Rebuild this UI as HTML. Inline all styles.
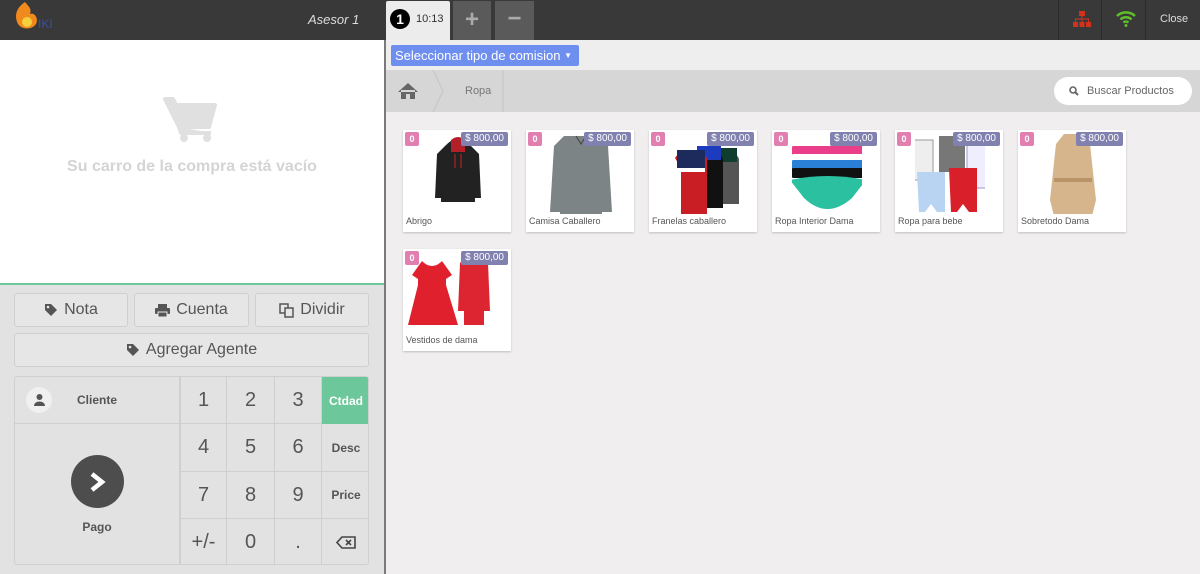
<!DOCTYPE html>
<html><head><meta charset="utf-8"><style>
*{box-sizing:border-box;margin:0;padding:0}
body{width:1200px;height:574px;overflow:hidden;font-family:"Liberation Sans",sans-serif;background:#f0eeef;position:relative}
.a{position:absolute}
.hdr{left:0;top:0;width:1200px;height:40px;background:#393939}
.btn{position:absolute;background:#e6e6e6;border:1px solid #cfcfcf;border-radius:3px;color:#555;font-size:16px;display:flex;align-items:center;justify-content:center;gap:6px}
.k{position:absolute;border-right:1px solid #cfcfcf;border-bottom:1px solid #cfcfcf;display:flex;align-items:center;justify-content:center;color:#555;font-size:20px}
.s{font-size:12px;font-weight:bold}
.card{position:absolute;width:108px;height:102px;background:#fff;box-shadow:0 1px 2px rgba(0,0,0,.2)}
.q{position:absolute;left:2px;top:2px;width:14px;height:14px;background:#e07fb0;color:#fff;font-size:9px;font-weight:bold;text-align:center;line-height:14px;border-radius:2px}
.p{position:absolute;right:3px;top:2px;height:14px;padding:0 4px;background:#8181b0;color:#fff;font-size:10px;line-height:14px;border-radius:2px}
.n{position:absolute;left:3px;top:86px;font-size:9px;color:#555}
.im{position:absolute;left:20px;top:2px;width:70px;height:82px}
</style></head><body>
<div class="a hdr"></div>
<svg class="a" style="left:8px;top:0" width="48" height="32"><path d="M17 2 C8 8 6 16 10 24 C14 30 24 30 28 24 C31 18 26 12 22 14 C24 8 20 6 17 2Z" fill="#f08a1c"/><circle cx="19" cy="22" r="5" fill="#f4d03f"/><text x="30" y="28" font-size="12" fill="#3a4fa0" font-family="Liberation Sans">IKI</text></svg>
<div class="a" style="left:308px;top:12px;color:#ddd;font-size:13px;font-style:italic">Asesor 1</div>
<div class="a" style="left:386px;top:1px;width:64px;height:39px;background:#ececec;border-radius:2px 2px 0 0"></div>
<div class="a" style="left:390px;top:9px;width:20px;height:20px;border-radius:50%;background:#000;color:#fff;font-weight:bold;font-size:14px;text-align:center;line-height:20px">1</div>
<div class="a" style="left:416px;top:13px;font-size:11px;color:#333">10:13</div>
<div class="a" style="left:453px;top:1px;width:38px;height:39px;background:#5a5a5a;color:#aaa;font-size:24px;text-align:center;line-height:38px;font-weight:bold">+</div>
<div class="a" style="left:495px;top:1px;width:39px;height:39px;background:#5a5a5a;color:#aaa;font-size:24px;text-align:center;line-height:36px;font-weight:bold">−</div>
<div class="a" style="left:1058px;top:0;width:1px;height:40px;background:#2a2a2a"></div>
<div class="a" style="left:1101px;top:0;width:1px;height:40px;background:#2a2a2a"></div>
<div class="a" style="left:1145px;top:0;width:1px;height:40px;background:#2a2a2a"></div>
<svg class="a" style="left:1073px;top:11px" width="18" height="17"><rect x="6" y="0" width="6" height="5" fill="#d2321c"/><rect x="8.5" y="5" width="1" height="3" fill="#d2321c"/><rect x="2" y="7.5" width="14" height="1" fill="#d2321c"/><rect x="2" y="8" width="1" height="3" fill="#d2321c"/><rect x="15" y="8" width="1" height="3" fill="#d2321c"/><rect x="8.5" y="8" width="1" height="3" fill="#d2321c"/><rect x="0" y="11" width="5" height="5" fill="#d2321c"/><rect x="6.5" y="11" width="5" height="5" fill="#d2321c"/><rect x="13" y="11" width="5" height="5" fill="#d2321c"/></svg>
<svg class="a" style="left:1116px;top:11px" width="20" height="16"><path d="M1 5 A13 13 0 0 1 19 5" stroke="#5fbf2a" stroke-width="2.5" fill="none"/><path d="M4.5 8.5 A8 8 0 0 1 15.5 8.5" stroke="#5fbf2a" stroke-width="2.5" fill="none"/><path d="M7.5 11.5 A4 4 0 0 1 12.5 11.5" stroke="#5fbf2a" stroke-width="2.5" fill="none"/><circle cx="10" cy="14.5" r="1.5" fill="#5fbf2a"/></svg>
<div class="a" style="left:1160px;top:13px;color:#ddd;font-size:11px">Close</div>

<div class="a" style="left:0;top:40px;width:384px;height:243px;background:#fff"></div>
<svg class="a" style="left:163px;top:97px" width="54" height="46"><path d="M2 2 H10 L13 8 H52 L46 30 H16 Z M16 30 L18 36 H48" fill="#e0e0e0" stroke="#e0e0e0" stroke-width="4" stroke-linejoin="round"/><circle cx="21" cy="41" r="4" fill="#e0e0e0"/><circle cx="44" cy="41" r="4" fill="#e0e0e0"/></svg>
<div class="a" style="left:0;top:158px;width:384px;text-align:center;color:#d4d4d4;font-size:16px;font-weight:bold">Su carro de la compra está vacío</div>
<div class="a" style="left:0;top:283px;width:384px;height:2px;background:#6cc79a"></div>
<div class="a" style="left:0;top:285px;width:384px;height:289px;background:#e2e2e2"></div>
<div class="a" style="left:384px;top:40px;width:2px;height:534px;background:#7a7a7a"></div>

<div class="btn" style="left:14px;top:293px;width:114px;height:34px"><svg width="14" height="14"><path d="M1 1 H7 L13 7 L7 13 L1 7Z" fill="#555"/><circle cx="4" cy="4" r="1.3" fill="#e6e6e6"/></svg>Nota</div>
<div class="btn" style="left:134px;top:293px;width:115px;height:34px"><svg width="15" height="13"><rect x="3" y="0" width="9" height="4" fill="#555"/><rect x="0" y="4" width="15" height="6" rx="1" fill="#555"/><rect x="3" y="8" width="9" height="5" fill="#555" stroke="#e6e6e6"/></svg>Cuenta</div>
<div class="btn" style="left:255px;top:293px;width:114px;height:34px"><svg width="15" height="15"><rect x="1" y="1" width="8" height="9" fill="none" stroke="#555" stroke-width="1.5"/><rect x="6" y="5" width="8" height="9" fill="#e6e6e6" stroke="#555" stroke-width="1.5"/></svg>Dividir</div>
<div class="btn" style="left:14px;top:333px;width:355px;height:34px"><svg width="14" height="14"><path d="M1 1 H7 L13 7 L7 13 L1 7Z" fill="#555"/><circle cx="4" cy="4" r="1.3" fill="#e6e6e6"/></svg>Agregar Agente</div>

<div class="a" style="left:14px;top:376px;width:355px;height:189px;border:1px solid #cfcfcf;border-radius:3px;background:#e2e2e2;overflow:hidden">
<div class="k" style="left:0;top:0;width:165px;height:47px;justify-content:flex-start"><div style="margin-left:11px;width:26px;height:26px;border-radius:50%;background:#f0f0f0;display:flex;align-items:center;justify-content:center"><svg width="11" height="12"><circle cx="5.5" cy="3" r="3" fill="#555"/><path d="M0 12 C0 6 11 6 11 12Z" fill="#555"/></svg></div><span class="s" style="margin-left:25px">Cliente</span></div>
<div class="k" style="left:0;top:47px;width:165px;height:141px;border-bottom:0;flex-direction:column"><div style="width:53px;height:53px;border-radius:50%;background:#4d4d4d;display:flex;align-items:center;justify-content:center"><svg width="20" height="22"><path d="M5 3 L15 11 L5 19" stroke="#fff" stroke-width="4.5" fill="none"/></svg></div><span class="s" style="margin-top:12px">Pago</span></div>
<div class="k" style="left:165px;top:0;width:47px;height:47px;border-left:1px solid #cfcfcf">1</div>
<div class="k" style="left:212px;top:0;width:48px;height:47px">2</div>
<div class="k" style="left:260px;top:0;width:47px;height:47px">3</div>
<div class="k s" style="left:307px;top:0;width:48px;height:47px;background:#6cc79a;color:#fff;border:0">Ctdad</div>
<div class="k" style="left:165px;top:47px;width:47px;height:48px;border-left:1px solid #cfcfcf">4</div>
<div class="k" style="left:212px;top:47px;width:48px;height:48px">5</div>
<div class="k" style="left:260px;top:47px;width:47px;height:48px">6</div>
<div class="k s" style="left:307px;top:47px;width:48px;height:48px;border-right:0">Desc</div>
<div class="k" style="left:165px;top:95px;width:47px;height:47px;border-left:1px solid #cfcfcf">7</div>
<div class="k" style="left:212px;top:95px;width:48px;height:47px">8</div>
<div class="k" style="left:260px;top:95px;width:47px;height:47px">9</div>
<div class="k s" style="left:307px;top:95px;width:48px;height:47px;border-right:0">Price</div>
<div class="k" style="left:165px;top:142px;width:47px;height:47px;border-left:1px solid #cfcfcf;border-bottom:0">+/-</div>
<div class="k" style="left:212px;top:142px;width:48px;height:47px;border-bottom:0">0</div>
<div class="k" style="left:260px;top:142px;width:47px;height:47px;border-bottom:0">.</div>
<div class="k" style="left:307px;top:142px;width:48px;height:47px;border:0"><svg width="20" height="13"><path d="M6 1 H19 V12 H6 L1 6.5Z" fill="none" stroke="#444" stroke-width="1.6"/><path d="M10 4 L15 9 M15 4 L10 9" stroke="#444" stroke-width="1.6"/></svg></div>
</div>

<div class="a" style="left:386px;top:40px;width:814px;height:30px;background:#efeeef"></div>
<div class="a" style="left:391px;top:45px;width:188px;height:21px;background:#6e8ef0;border-radius:2px;color:#fff;font-size:13px;line-height:21px;padding-left:4px">Seleccionar tipo de comision <span style="font-size:8px;vertical-align:2px">▼</span></div>
<div class="a" style="left:386px;top:70px;width:814px;height:42px;background:#d6d6d6"></div>
<svg class="a" style="left:386px;top:70px" width="120" height="42"><path d="M12 22 L22 13 L32 22 M15 20 V29 H20 V24 H24 V29 H29 V20" fill="#666"/><path d="M47 0 L57 21 L47 42" stroke="#c4c4c4" fill="none"/><line x1="117" y1="0" x2="117" y2="42" stroke="#c4c4c4"/></svg>
<div class="a" style="left:465px;top:85px;font-size:11px;color:#777">Ropa</div>
<div class="a" style="left:1054px;top:77px;width:138px;height:28px;background:#fff;border-radius:14px;font-size:11px;color:#666;line-height:28px;padding-left:33px">Buscar Productos</div>
<svg class="a" style="left:1069px;top:86px" width="10" height="10"><circle cx="4" cy="4" r="3" stroke="#666" stroke-width="1.6" fill="none"/><path d="M6 6 L9 9" stroke="#666" stroke-width="2"/></svg>

<div class="card" style="left:403px;top:130px"><svg class="im"><path d="M22 14 Q35 0 48 14 L56 22 L58 66 H52 V70 H18 V66 H12 L14 22Z" fill="#222"/><path d="M28 8 Q35 2 42 8 V20 H28Z" fill="#b3202a"/><line x1="32" y1="22" x2="32" y2="36" stroke="#c22"/><line x1="38" y1="22" x2="38" y2="36" stroke="#c22"/></svg><div class="q">0</div><div class="p">$ 800,00</div><div class="n">Abrigo</div></div>
<div class="card" style="left:526px;top:130px"><svg class="im"><path d="M18 4 H52 L62 14 L66 80 H56 V84 H14 V80 H4 L8 14Z" fill="#7c8486"/><path d="M30 4 L35 12 L40 4" stroke="#444" fill="none"/></svg><div class="q">0</div><div class="p">$ 800,00</div><div class="n">Camisa Caballero</div></div>
<div class="card" style="left:649px;top:130px"><svg class="im"><path d="M46 20 H66 L72 30 V72 H50Z" fill="#555"/><rect x="46" y="16" width="22" height="14" fill="#0f3d2e"/><path d="M28 18 H50 L54 28 V76 H30Z" fill="#111"/><rect x="28" y="14" width="24" height="14" fill="#1c3bbf"/><path d="M6 26 L12 18 H32 L38 26 V82 H12 V36Z" fill="#c81e24"/><rect x="8" y="18" width="28" height="18" fill="#1c2a5c"/><rect x="8" y="36" width="28" height="4" fill="#fff"/></svg><div class="q">0</div><div class="p">$ 800,00</div><div class="n">Franelas caballero</div></div>
<div class="card" style="left:772px;top:130px"><svg class="im"><rect x="-2" y="14" width="76" height="12" rx="4" fill="#ea3d8a"/><rect x="-2" y="22" width="76" height="8" rx="4" fill="#fff"/><rect x="-2" y="28" width="76" height="10" rx="4" fill="#2a7fd6"/><rect x="-2" y="36" width="76" height="10" rx="4" fill="#111"/><path d="M-2 48 Q35 40 74 48 L60 66 Q35 88 12 66Z" fill="#2bc0a0"/></svg><div class="q">0</div><div class="p">$ 800,00</div><div class="n">Ropa Interior Dama</div></div>
<div class="card" style="left:895px;top:130px"><svg class="im"><rect x="-8" y="8" width="26" height="40" fill="#eee" stroke="#999"/><rect x="24" y="4" width="26" height="36" fill="#777"/><rect x="52" y="10" width="24" height="46" fill="#eef" stroke="#99c"/><path d="M2 40 H30 V80 H22 L16 72 L10 80 H4Z" fill="#b9d4f2"/><path d="M34 36 H62 V80 H54 L48 72 L42 80 H36Z" fill="#d9202a"/></svg><div class="q">0</div><div class="p">$ 800,00</div><div class="n">Ropa para bebe</div></div>
<div class="card" style="left:1018px;top:130px"><svg class="im"><path d="M26 2 H44 L52 12 L58 68 L54 84 H16 L12 68 L18 12Z" fill="#d6b58c"/><rect x="16" y="46" width="38" height="4" fill="#b99468"/></svg><div class="q">0</div><div class="p">$ 800,00</div><div class="n">Sobretodo Dama</div></div>
<div class="card" style="left:403px;top:249px"><svg class="im" style="left:5px;width:100px"><path d="M14 10 H34 L44 24 L38 28 V34 L50 74 H0 L10 34 V28 L4 24Z" fill="#e0202c"/><path d="M12 8 Q24 22 36 8Z" fill="#fff"/><path d="M56 8 H74 L80 12 L82 60 L76 60 V74 H56 V60 L50 60 L52 12Z" fill="#dd2532"/></svg><div class="q">0</div><div class="p">$ 800,00</div><div class="n">Vestidos de dama</div></div>
</body></html>
